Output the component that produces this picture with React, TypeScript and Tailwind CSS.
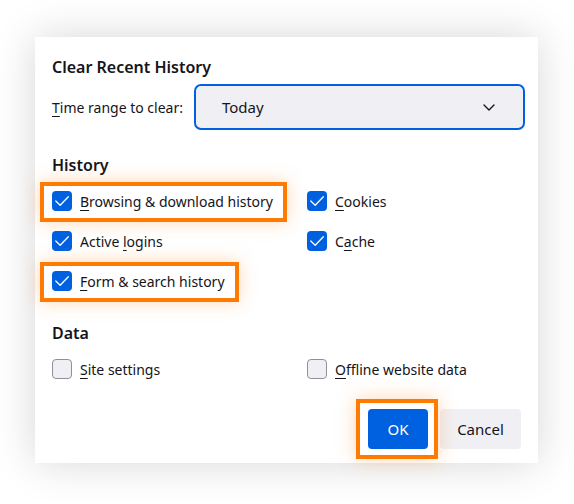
import React from 'react';

type Item = { label: string; key: number; checked: boolean; mark?: boolean };

const historyItems: Item[] = [
  { label: 'Browsing & download history', key: 0, checked: true, mark: true },
  { label: 'Cookies', key: 0, checked: true },
  { label: 'Active logins', key: 7, checked: true },
  { label: 'Cache', key: 1, checked: true },
  { label: 'Form & search history', key: 0, checked: true, mark: true },
];

const dataItems: Item[] = [
  { label: 'Site settings', key: 0, checked: false },
  { label: 'Offline website data', key: 0, checked: false },
];

// underline the access key, like the desktop dialog does
function AccessLabel({ text, at }: { text: string; at: number }) {
  return (
    <span>
      {text.slice(0, at)}
      <span className="underline underline-offset-[3px] decoration-1">{text[at]}</span>
      {text.slice(at + 1)}
    </span>
  );
}

function Checkbox({ checked }: { checked: boolean }) {
  if (!checked) {
    return <span className="block w-5 h-5 rounded-[4px] border border-[#8f8f9d] bg-[#f0f0f4]" />;
  }
  return (
    <span className="flex items-center justify-center w-5 h-5 rounded-[4px] bg-[#0061e0]">
      <svg width="20" height="20" viewBox="0 0 20 20" fill="none">
        <path d="M3.8 10 L8.2 14.2 L16.3 5.8" stroke="white" strokeWidth="1.3" strokeLinecap="round" strokeLinejoin="round" />
      </svg>
    </span>
  );
}

function Highlight({ className }: { className: string }) {
  return (
    <span
      className={`absolute pointer-events-none border-4 border-[#ff7a00] shadow-[0_0_18px_rgba(255,140,40,0.35)] ${className}`}
    />
  );
}

function CheckRow({ item }: { item: Item }) {
  return (
    <div className="h-10 flex items-center">
      <div className="relative flex items-center gap-2">
        {item.mark && <Highlight className="-left-[12px] -right-[14px] -top-[9px] -bottom-[10px]" />}
        <Checkbox checked={item.checked} />
        <AccessLabel text={item.label} at={item.key} />
      </div>
    </div>
  );
}

export default function App() {
  return (
    <div className="min-h-[504px] bg-white pt-[37px] pl-[35px] text-[#15141a] font-['Noto_Sans',sans-serif] text-[14px]">
      <div className="w-[503px] bg-white shadow-[0_0_40px_rgba(0,0,0,0.16)] pt-[18px] pl-[17px] pr-[13px] pb-[14px]">
        <h1 className="text-[16px] leading-6 font-semibold">Clear Recent History</h1>

        <div className="flex items-center mt-[5px]">
          <span className="w-[142px]">
            <AccessLabel text="Time range to clear:" at={0} />
          </span>
          <div className="flex-1 h-[46px] rounded-[7px] border-2 border-[#0061e0] bg-[#f0f0f4] flex items-center justify-between pl-[26px] pr-[28px]">
            <span className="text-[15px]">Today</span>
            <svg width="12" height="7" viewBox="0 0 12 7" fill="none">
              <path d="M1 1 L6 6 L11 1" stroke="#15141a" strokeWidth="1.4" strokeLinecap="round" strokeLinejoin="round" />
            </svg>
          </div>
        </div>

        <h2 className="mt-[23px] text-[16px] leading-6 font-semibold">History</h2>
        <div className="mt-[4px] grid grid-cols-[255px_1fr]">
          {historyItems.map((item) => (
            <CheckRow key={item.label} item={item} />
          ))}
        </div>

        <h2 className="mt-[20px] text-[16px] leading-6 font-semibold">Data</h2>
        <div className="mt-[4px] grid grid-cols-[255px_1fr]">
          {dataItems.map((item) => (
            <CheckRow key={item.label} item={item} />
          ))}
        </div>

        <div className="mt-[20px] flex justify-end gap-3 pr-[4px]">
          <div className="relative">
            <Highlight className="-left-[12px] -right-[10px] -top-[10px] -bottom-[10px]" />
            <button className="relative w-[60px] h-10 rounded-[4px] bg-[#0061e0] text-white text-[15px]">OK</button>
          </div>
          <button className="w-[81px] h-10 rounded-[4px] bg-[#f0f0f4] text-[15px]">Cancel</button>
        </div>
      </div>
    </div>
  );
}
